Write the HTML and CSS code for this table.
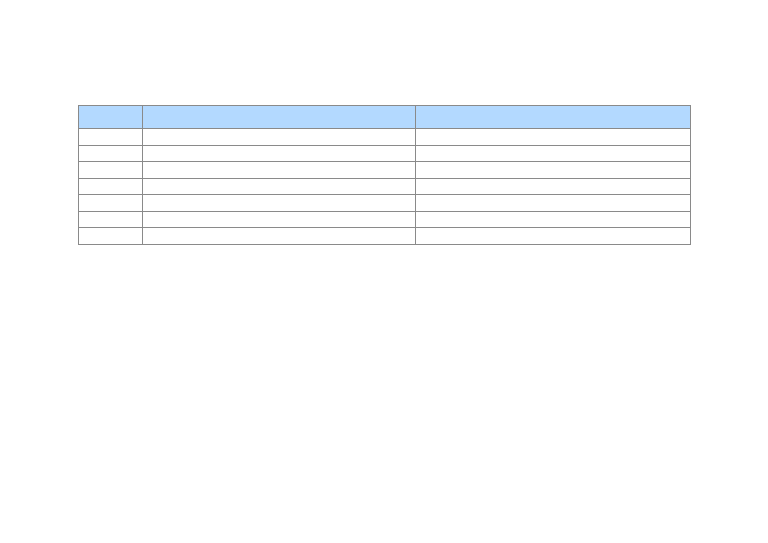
FILE: index.html
```html
<!DOCTYPE html>
<html>
<head>
<meta charset="utf-8">
<link rel="stylesheet" href="styles.css">
</head>
<body>
<div class="page">
  <table class="grid">
    <colgroup>
      <col class="c1"><col class="c2"><col class="c3">
    </colgroup>
    <thead>
      <tr class="head"><th></th><th></th><th></th></tr>
    </thead>
    <tbody>
      <tr class="row"><td></td><td></td><td></td></tr>
      <tr class="row"><td></td><td></td><td></td></tr>
      <tr class="row"><td></td><td></td><td></td></tr>
      <tr class="row"><td></td><td></td><td></td></tr>
      <tr class="row"><td></td><td></td><td></td></tr>
      <tr class="row"><td></td><td></td><td></td></tr>
      <tr class="row"><td></td><td></td><td></td></tr>
    </tbody>
  </table>
</div>
</body>
</html>
```
FILE: styles.css
```css
html, body {
  margin: 0;
  padding: 0;
  background: #ffffff;
  font-family: "Liberation Sans", Arial, sans-serif;
}
.page {
  padding: 105px 0 0 78px;
}
.grid {
  border-collapse: collapse;
  table-layout: fixed;
  width: 612px;
}
.c1 { width: 64px; }
.c2 { width: 273px; }
.c3 { width: 275px; }
.grid th, .grid td {
  border: 1px solid #8a8a8a;
  padding: 0;
}
.head { height: 23px; }
.head th { background: #b3d9ff; }
.row { height: 16.5px; }
```
